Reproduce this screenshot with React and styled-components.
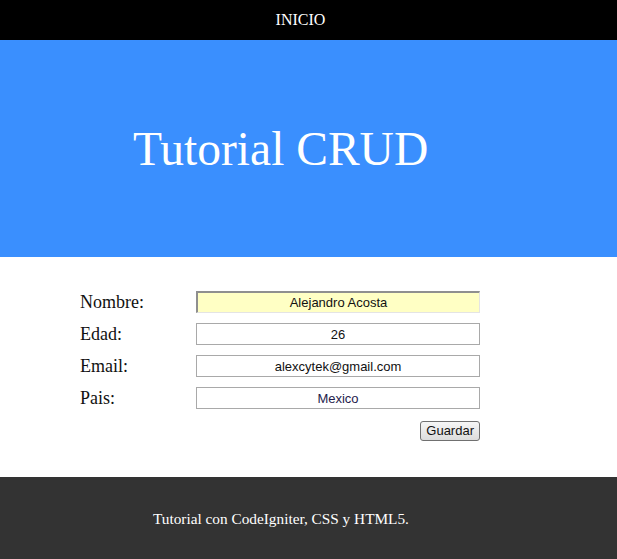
import React from 'react'
import styled, { createGlobalStyle } from 'styled-components'

const GlobalStyle = createGlobalStyle`
   html, body {
      margin: 0;
      padding: 0;
      background: #fff;
      font-family: "Liberation Serif", "Times New Roman", serif;
   }
`

const Page = styled.div`
   width: 617px;
   min-height: 559px;
   display: flex;
   flex-direction: column;
`

const Nav = styled.nav`
   height: 40px;
   background: #000;
   display: flex;
   align-items: center;
   justify-content: center;
   padding-right: 16px;
   a {
      color: #fff;
      font-size: 16px;
      text-decoration: none;
   }
`

const Hero = styled.header`
   height: 217px;
   background: #3a8ffe;
   display: flex;
   align-items: center;
   padding-left: 133px;
   h1 {
      margin: 0;
      color: #fff;
      font-weight: normal;
      font-size: 47.5px;
   }
`

const Section = styled.section`
   height: 220px;
   box-sizing: border-box;
   padding: 34px 0 0 80px;
`

const Form = styled.form`
   display: grid;
   grid-template-columns: 116px 284px;
   grid-auto-rows: 22px;
   row-gap: 10px;
   align-items: center;
`

const Label = styled.label`
   font-size: 18px;
   color: #111;
   line-height: 22px;
`

const Input = styled.input`
   box-sizing: border-box;
   width: 284px;
   height: 22px;
   margin: 0;
   padding: 0 4px;
   text-align: center;
   font-family: "Liberation Sans", Arial, sans-serif;
   font-size: 13px;
   color: ${p => p.$ink || '#111'};
   background: ${p => (p.$focused ? '#ffffc4' : '#fff')};
   border: 1px solid #a9a9a9;
   ${p =>
      p.$focused &&
      `
      border-width: 2px 1px 1px 2px;
      border-color: #8f8f8f #e4e4e4 #e4e4e4 #8f8f8f;
   `}
   outline: none;
`

const Actions = styled.div`
   grid-column: 2;
   display: flex;
   justify-content: flex-end;
   margin-top: 1px;
`

const Button = styled.button`
   height: 20px;
   padding: 0 5px;
   font-family: "Liberation Sans", Arial, sans-serif;
   font-size: 13px;
   color: #111;
   background: linear-gradient(#f6f6f6, #dcdcdc);
   border: 1px solid #707070;
   border-radius: 3px;
`

const Footer = styled.footer`
   height: 82px;
   background: #333;
   display: flex;
   align-items: center;
   padding-left: 153px;
   padding-top: 2px;
   box-sizing: border-box;
   color: #fff;
   font-size: 15.3px;
`

const fields = [
   { label: 'Nombre:', value: 'Alejandro Acosta', focused: true },
   { label: 'Edad:', value: '26' },
   { label: 'Email:', value: 'alexcytek@gmail.com' },
   { label: 'Pais:', value: 'Mexico', ink: '#241c4c' },
]

const App = () => {
   return (
      <Page>
         <GlobalStyle />
         <Nav>
            <a href="#">INICIO</a>
         </Nav>
         <Hero>
            <h1>Tutorial CRUD</h1>
         </Hero>
         <Section>
            <Form onSubmit={e => e.preventDefault()}>
               {fields.map(f => (
                  <React.Fragment key={f.label}>
                     <Label>{f.label}</Label>
                     <Input
                        defaultValue={f.value}
                        $focused={f.focused}
                        $ink={f.ink}
                     />
                  </React.Fragment>
               ))}
               <Actions>
                  <Button type="submit">Guardar</Button>
               </Actions>
            </Form>
         </Section>
         <Footer>Tutorial con CodeIgniter, CSS y HTML5.</Footer>
      </Page>
   )
}

export default App
